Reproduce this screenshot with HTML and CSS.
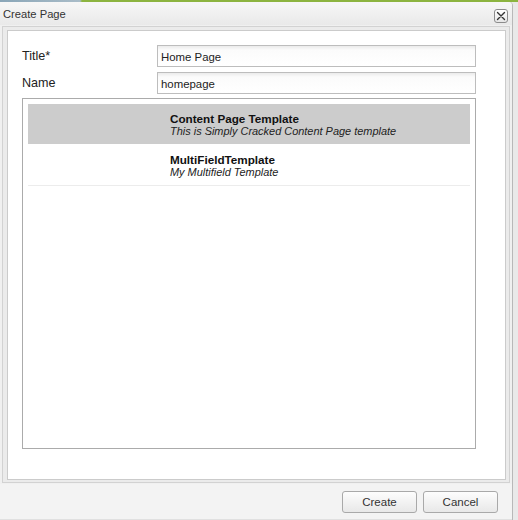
FILE: index.html
```html
<!DOCTYPE html>
<html>
<head>
<meta charset="utf-8">
<link rel="stylesheet" href="styles.css">
</head>
<body>
<div class="topstrip"></div>
<div class="dialog">
  <div class="header">
    <span class="header-title">Create Page</span>
    <button class="close" aria-label="Close">
      <svg width="10" height="10" viewBox="0 0 10 10"><path d="M1.5 1.5 L8.5 8.5 M8.5 1.5 L1.5 8.5" stroke="#333" stroke-width="1.4" stroke-linecap="round"/></svg>
    </button>
  </div>
  <div class="body">
    <div class="frame">
      <div class="panel">
        <div class="field">
          <label class="label">Title*</label>
          <input class="input" type="text" value="Home Page">
        </div>
        <div class="field">
          <label class="label">Name</label>
          <input class="input" type="text" value="homepage">
        </div>
        <div class="listbox">
          <div class="item selected">
            <div class="item-title">Content Page Template</div>
            <div class="item-desc">This is Simply Cracked Content Page template</div>
          </div>
          <div class="item">
            <div class="item-title">MultiFieldTemplate</div>
            <div class="item-desc">My Multifield Template</div>
          </div>
        </div>
      </div>
    </div>
  </div>
  <div class="footer">
    <button class="btn">Create</button>
    <button class="btn">Cancel</button>
  </div>
</div>
</body>
</html>
```

FILE: styles.css
```css
html, body {
  margin: 0;
  padding: 0;
}
body {
  width: 518px;
  height: 520px;
  overflow: hidden;
  background: #e9e9e9;
  font-family: "Liberation Sans", Arial, sans-serif;
  color: #222;
  position: relative;
}
.topstrip {
  height: 2px;
  background: linear-gradient(to right, #8aa6b8 0, #a9bcc8 80px, #8cb440 82px, #8cb440 100%);
}
.dialog {
  width: 513px;
  height: 518px;
  background: #f0f0f0;
  border-right: 1px solid #b8b8b8;
  border-top-right-radius: 4px;
  display: flex;
  flex-direction: column;
  box-sizing: border-box;
}
.header {
  height: 23px;
  flex: none;
  display: flex;
  align-items: center;
  justify-content: space-between;
  padding: 0 4px 0 3px;
  background: linear-gradient(to bottom, #f7f7f7, #e9e9e9);
  border-top-right-radius: 4px;
}
.header-title {
  font-size: 11.2px;
  color: #333;
  padding-top: 1px;
}
.close {
  width: 14px;
  height: 14px;
  margin-top: 5px;
  padding: 0;
  border: 1px solid #8c8c8c;
  border-radius: 3px;
  background: linear-gradient(to bottom, #ffffff, #e6e6e6);
  display: flex;
  align-items: center;
  justify-content: center;
}
.close svg {
  display: block;
}
.body {
  flex: 1;
  padding: 1px 2px 1px 2px;
  display: flex;
}
.frame {
  flex: 1;
  border: 1px solid #d2d2d2;
  background: #ebebeb;
  padding: 3px 3px 2px 4px;
  display: flex;
}
.panel {
  flex: 1;
  background: #fff;
  border: 1px solid #cbcbcb;
  padding: 14px 29px 30px 14px;
  display: flex;
  flex-direction: column;
}
.field {
  display: flex;
  align-items: center;
  height: 22px;
  margin-bottom: 5px;
}
.field + .field {
  margin-bottom: 4px;
}
.label {
  width: 135px;
  flex: none;
  font-size: 12.6px;
  color: #222;
}
.input {
  flex: 1;
  height: 22px;
  box-sizing: border-box;
  margin: 0;
  border: 1px solid #bdbdbd;
  background: linear-gradient(to bottom, #ebebeb 0, #fbfbfb 4px, #ffffff 100%);
  font-family: "Liberation Sans", Arial, sans-serif;
  font-size: 11.4px;
  color: #222;
  padding: 1px 3px 0 3px;
  outline: none;
}
.listbox {
  flex: 1;
  border: 1px solid #ababab;
  padding: 5px 5px 5px 5px;
}
.item {
  padding: 8px 0 7px 142px;
  border-bottom: 1px solid #ececec;
}
.item.selected {
  background: #cccccc;
  border-bottom-color: #fff;
}
.item-title {
  font-weight: bold;
  font-size: 11.7px;
  line-height: 13px;
  color: #111;
}
.item-desc {
  font-style: italic;
  font-size: 10.95px;
  line-height: 12px;
  color: #222;
}
.footer {
  flex: none;
  height: 36px;
  box-sizing: border-box;
  background: #f3f3f3;
  border-bottom: 1px solid #e0e0e0;
  display: flex;
  justify-content: flex-end;
  gap: 6px;
  padding: 7px 14px 0 0;
}
.btn {
  width: 75px;
  height: 22px;
  margin: 0;
  padding: 0;
  border: 1px solid #a9a9a9;
  border-radius: 3px;
  background: linear-gradient(to bottom, #fdfdfd, #e8e8e8);
  font-family: "Liberation Sans", Arial, sans-serif;
  font-size: 11.5px;
  color: #333;
}
```
